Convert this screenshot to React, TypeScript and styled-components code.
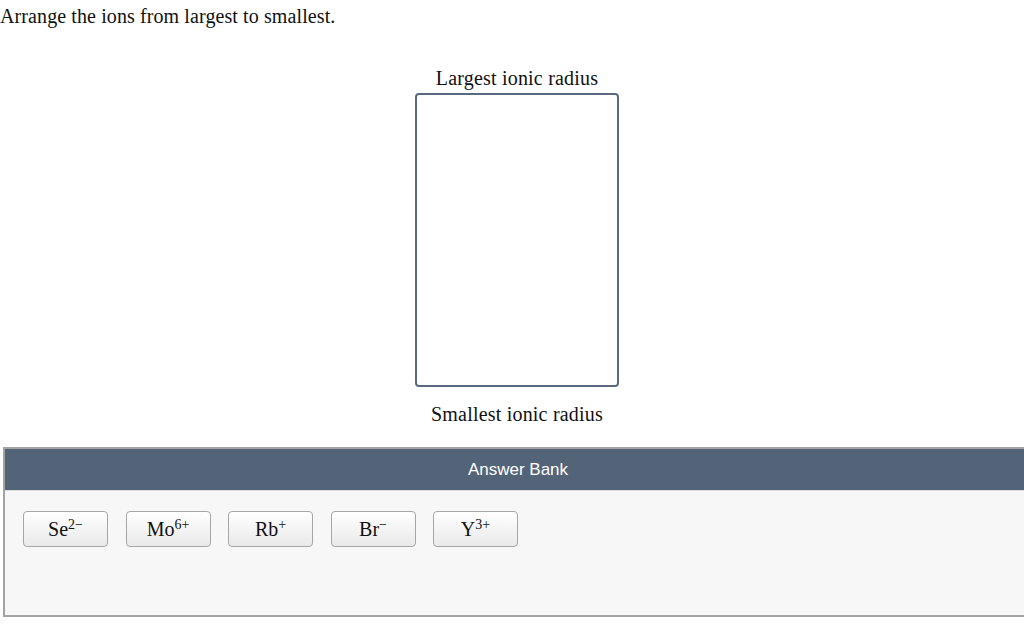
import styled, { createGlobalStyle } from "styled-components";

const GlobalStyle = createGlobalStyle`
  html, body {
    margin: 0;
    padding: 0;
    background: #ffffff;
    overflow: hidden;
  }
  body {
    font-family: "Liberation Serif", "Times New Roman", serif;
    color: #111;
  }
`;

type Ion = { symbol: string; charge: string };

const ions: Ion[] = [
  { symbol: "Se", charge: "2−" },
  { symbol: "Mo", charge: "6+" },
  { symbol: "Rb", charge: "+" },
  { symbol: "Br", charge: "−" },
  { symbol: "Y", charge: "3+" },
];

export default function App() {
  return (
    <>
      <GlobalStyle />
      <Page>
        <Prompt>Arrange the ions from largest to smallest.</Prompt>
        <Ranking>
          <RankLabel>Largest ionic radius</RankLabel>
          <DropZone />
          <RankLabel $bottom>Smallest ionic radius</RankLabel>
        </Ranking>
        <Bank>
          <BankHeader>Answer Bank</BankHeader>
          <BankBody>
            {ions.map((ion) => (
              <Tile key={ion.symbol}>
                <span>
                  {ion.symbol}
                  <sup>{ion.charge}</sup>
                </span>
              </Tile>
            ))}
          </BankBody>
        </Bank>
      </Page>
    </>
  );
}

const Page = styled.div`
  width: 1034px;
  padding-top: 5px;
  display: flex;
  flex-direction: column;
`;

const Prompt = styled.p`
  margin: 0;
  font-size: 20px;
  line-height: 22px;
  letter-spacing: 0.1px;
`;

const Ranking = styled.div`
  display: flex;
  flex-direction: column;
  align-items: center;
  margin-top: 40px;
`;

const RankLabel = styled.div<{ $bottom?: boolean }>`
  font-size: 20px;
  line-height: 22px;
  letter-spacing: 0.2px;
  margin-top: ${(p) => (p.$bottom ? "16px" : "0")};
  margin-bottom: ${(p) => (p.$bottom ? "0" : "4px")};
`;

const DropZone = styled.div`
  width: 200px;
  height: 290px;
  border: 2px solid #5a6a7e;
  border-radius: 4px;
  background: #fff;
`;

const Bank = styled.div`
  margin: 22px 3px 0;
  border: 2px solid #a3a3a3;
  border-right: none;
  background: #f7f7f7;
`;

const BankHeader = styled.div`
  height: 41px;
  background: #536479;
  color: #fff;
  font-family: "Liberation Sans", Arial, sans-serif;
  font-size: 17px;
  display: flex;
  align-items: center;
  justify-content: center;
  border-bottom: 1px solid #dcdcdc;
`;

const BankBody = styled.div`
  height: 124px;
  box-sizing: border-box;
  padding: 20px 0 0 18px;
  display: flex;
  align-items: flex-start;
  gap: 17.5px;
`;

const Tile = styled.div`
  width: 85px;
  height: 36px;
  box-sizing: border-box;
  border: 1px solid #a6a6a6;
  border-radius: 4px;
  background: linear-gradient(#ffffff, #e9e9e9);
  font-size: 20px;
  display: flex;
  align-items: center;
  justify-content: center;

  sup {
    font-size: 14px;
    line-height: 0;
    vertical-align: 0;
    position: relative;
    top: -7px;
  }
`;
